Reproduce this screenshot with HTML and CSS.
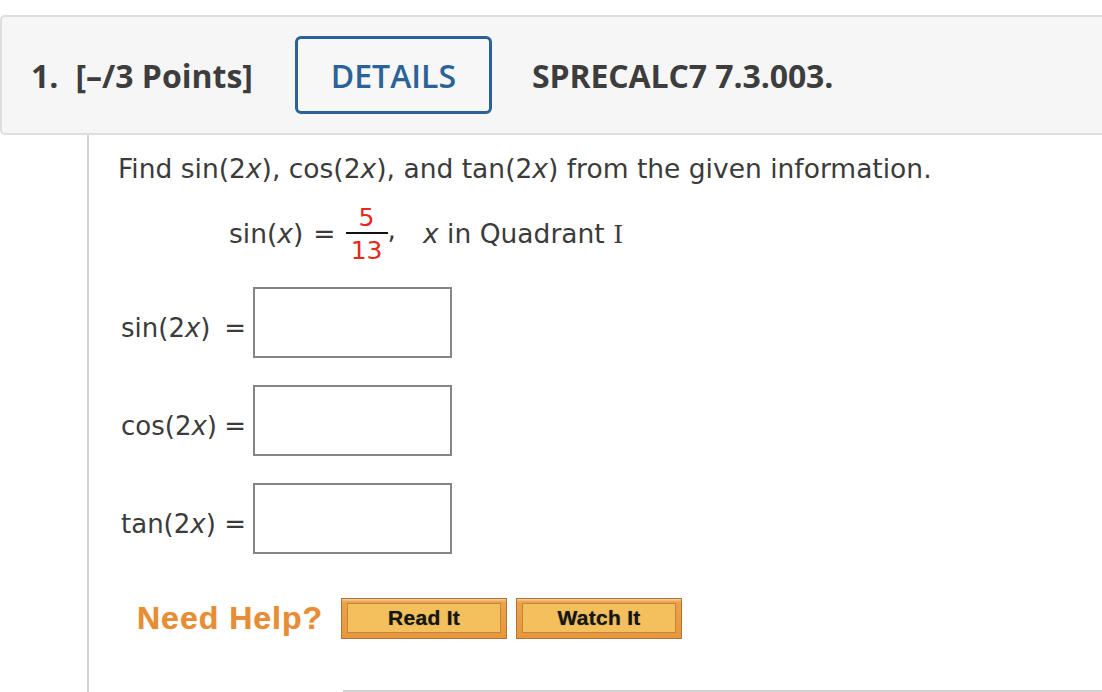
FILE: index.html
```html
<!DOCTYPE html>
<html lang="en">
<head>
<meta charset="utf-8">
<title>SPRECALC7 7.3.003.</title>
<link rel="stylesheet" href="styles.css">
</head>
<body>
<div class="page">
  <header class="qhead">
    <span class="qnum">1.</span>
    <span class="qpoints">[–/3 Points]</span>
    <button class="details" type="button">DETAILS</button>
    <span class="qref">SPRECALC7 7.3.003.</span>
  </header>
  <main class="qbody">
    <p class="prompt">Find sin(2<i>x</i>), cos(2<i>x</i>), and tan(2<i>x</i>) from the given information.</p>
    <div class="given">
      <span>sin(<i>x</i>)</span>
      <span class="eq">=</span>
      <span class="frac"><span class="num">5</span><span class="den">13</span></span><span class="comma">,</span>
      <span class="cond"><i>x</i> in Quadrant <span class="serif">I</span></span>
    </div>
    <div class="answers">
      <div class="row">
        <span class="label"><span>sin(2<i>x</i>)</span><span>=</span></span>
        <span class="box"></span>
      </div>
      <div class="row">
        <span class="label"><span>cos(2<i>x</i>)</span><span>=</span></span>
        <span class="box"></span>
      </div>
      <div class="row">
        <span class="label"><span>tan(2<i>x</i>)</span><span>=</span></span>
        <span class="box"></span>
      </div>
    </div>
    <div class="help">
      <span class="help-title">Need Help?</span>
      <button class="hbtn" type="button"><span>Read It</span></button>
      <button class="hbtn" type="button"><span>Watch It</span></button>
    </div>
    <div class="rule"></div>
  </main>
</div>
</body>
</html>
```

FILE: styles.css
```css
html, body {
  margin: 0;
  padding: 0;
  background: #ffffff;
  overflow: hidden;
}

.page {
  width: 1102px;
  height: 692px;
  overflow: hidden;
}

.qhead {
  margin-top: 15px;
  width: 1120px;
  height: 120px;
  box-sizing: border-box;
  border: 2px solid #dedede;
  border-radius: 5px;
  background: #f6f6f6;
  display: flex;
  align-items: center;
  padding-left: 29px;
  font-family: "Open Sans", sans-serif;
  font-weight: 700;
  font-size: 32px;
  color: #3d3d3d;
}

.qnum {
  margin-right: 17px;
}

.qpoints {
  margin-right: 42px;
}

.details {
  width: 197px;
  height: 78px;
  box-sizing: border-box;
  border: 3px solid #2b6399;
  border-radius: 6px;
  background: #f7f7f7;
  color: #2b6399;
  font-family: "Open Sans", sans-serif;
  font-weight: 600;
  font-size: 32px;
  padding: 0;
  margin-right: 40px;
}

.qref {
  letter-spacing: -0.1px;
}

.qbody {
  margin-left: 87px;
  border-left: 2px solid #d2d2d2;
  height: 557px;
  padding-left: 29px;
  font-family: "DejaVu Sans", Verdana, sans-serif;
  font-size: 26.5px;
  color: #3b3b3b;
}

.qbody i {
  font-style: italic;
}

.serif {
  font-family: "DejaVu Serif", serif;
  font-size: 25px;
}

.prompt {
  margin: 0;
  padding-top: 17px;
  line-height: 34px;
}

.given {
  display: flex;
  align-items: center;
  margin-top: 17px;
  margin-bottom: 3px;
  padding-left: 111px;
  height: 60px;
}

.eq {
  margin-left: 10px;
  margin-right: 10px;
}

.frac {
  display: inline-flex;
  flex-direction: column;
  align-items: center;
  color: #e6291d;
  font-size: 25px;
  line-height: 22px;
  width: 42px;
  margin-top: 2px;
}

.num {
  border-bottom: 2px solid #111;
  width: 100%;
  text-align: center;
  padding-bottom: 3px;
}

.den {
  padding-top: 6px;
}

.comma {
  margin-bottom: 8px;
  margin-right: 27px;
}

.answers {
  margin-top: 24px;
  display: flex;
  flex-direction: column;
  gap: 27px;
}

.row {
  display: flex;
  align-items: center;
}

.label {
  width: 125px;
  display: flex;
  justify-content: space-between;
  padding-top: 10px;
  margin-left: 3px;
  margin-right: 7px;
  line-height: 34px;
  font-size: 26px;
}

.box {
  display: block;
  width: 199px;
  height: 71px;
  box-sizing: border-box;
  border: 2px solid #858585;
  background: #fff;
}

.help {
  margin-top: 44px;
  display: flex;
  align-items: center;
  height: 41px;
}

.help-title {
  font-family: "Liberation Sans", Arial, sans-serif;
  font-weight: 700;
  font-size: 32px;
  letter-spacing: 1px;
  color: #e68d36;
  margin-left: 19px;
  margin-right: 18px;
  text-shadow: 0 0 1px rgba(230, 141, 54, 0.6);
}

.hbtn {
  width: 166px;
  height: 41px;
  box-sizing: border-box;
  border: 1px solid #ad753a;
  background: linear-gradient(#f6cfa0 0, #eda24a 3px, #e9963a 100%);
  padding: 4px 5px 5px;
  margin-right: 9px;
  display: flex;
}

.hbtn span {
  flex: 1;
  display: flex;
  align-items: center;
  justify-content: center;
  border: 1px solid #c28442;
  background: #f3c05d;
  font-family: "Liberation Sans", Arial, sans-serif;
  font-weight: 700;
  font-size: 21px;
  letter-spacing: 0.3px;
  color: #161616;
  text-shadow: 0 0 1px rgba(0, 0, 0, 0.5);
}

.rule {
  margin-top: 51px;
  margin-left: 225px;
  width: 900px;
  border-top: 2px solid #d0d0d0;
}
```
